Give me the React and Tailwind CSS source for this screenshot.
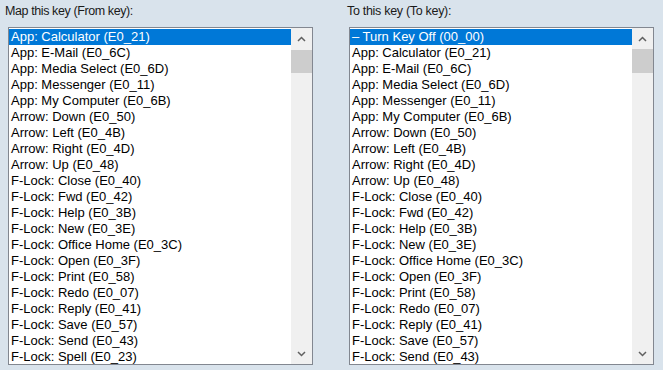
import React from "react";

const fromKeys = [
  "App: Calculator (E0_21)",
  "App: E-Mail (E0_6C)",
  "App: Media Select (E0_6D)",
  "App: Messenger (E0_11)",
  "App: My Computer (E0_6B)",
  "Arrow: Down (E0_50)",
  "Arrow: Left (E0_4B)",
  "Arrow: Right (E0_4D)",
  "Arrow: Up (E0_48)",
  "F-Lock: Close (E0_40)",
  "F-Lock: Fwd (E0_42)",
  "F-Lock: Help (E0_3B)",
  "F-Lock: New (E0_3E)",
  "F-Lock: Office Home (E0_3C)",
  "F-Lock: Open (E0_3F)",
  "F-Lock: Print (E0_58)",
  "F-Lock: Redo (E0_07)",
  "F-Lock: Reply (E0_41)",
  "F-Lock: Save (E0_57)",
  "F-Lock: Send (E0_43)",
  "F-Lock: Spell (E0_23)",
];

const toKeys = ["– Turn Key Off (00_00)", ...fromKeys.slice(0, 20)];

function ListBox({ items, thumbTop, thumbHeight }) {
  return (
    <div className="flex h-[338px] w-[305px] border border-[#828790] bg-white">
      <div className="flex-1 overflow-hidden pt-[1px]">
        {items.map((t, i) => (
          <div
            key={i}
            className={
              "h-[16px] whitespace-nowrap pl-[2px] leading-[16px] " +
              (i === 0 ? "bg-[#0078d7] text-white" : "text-black")
            }
          >
            {t}
          </div>
        ))}
      </div>
      <div className="flex w-[21px] flex-col bg-[#f0f0f0]">
        <div className="flex h-[21px] items-center justify-center">
          <svg width="9" height="6" viewBox="0 0 9 6">
            <path d="M1 5 L4.5 1.5 L8 5" fill="none" stroke="#606060" strokeWidth="1.5" />
          </svg>
        </div>
        <div className="relative flex-1">
          <div
            className="absolute left-0 right-0 bg-[#cdcdcd]"
            style={{ top: thumbTop, height: thumbHeight }}
          />
        </div>
        <div className="flex h-[21px] items-center justify-center">
          <svg width="9" height="6" viewBox="0 0 9 6">
            <path d="M1 1 L4.5 4.5 L8 1" fill="none" stroke="#606060" strokeWidth="1.5" />
          </svg>
        </div>
      </div>
    </div>
  );
}

export default function App() {
  return (
    <div
      className="flex h-[370px] w-[663px] gap-[36px] bg-[#d9e3ec] pl-[8px] pt-[3px] text-[13px]"
      style={{ fontFamily: '"Liberation Sans", Arial, sans-serif' }}
    >
      <div className="flex flex-col">
        <div className="-ml-[3px] h-[24px] text-[12.5px] leading-[16px] tracking-[-0.4px] text-[#1a1a1a]">
          Map this key (From key):
        </div>
        <ListBox items={fromKeys} thumbTop={1} thumbHeight={23} />
      </div>
      <div className="flex flex-col">
        <div className="-ml-[2px] h-[24px] text-[12.5px] leading-[16px] tracking-[-0.3px] text-[#1a1a1a]">
          To this key (To key):
        </div>
        <ListBox items={toKeys} thumbTop={0} thumbHeight={24} />
      </div>
    </div>
  );
}
